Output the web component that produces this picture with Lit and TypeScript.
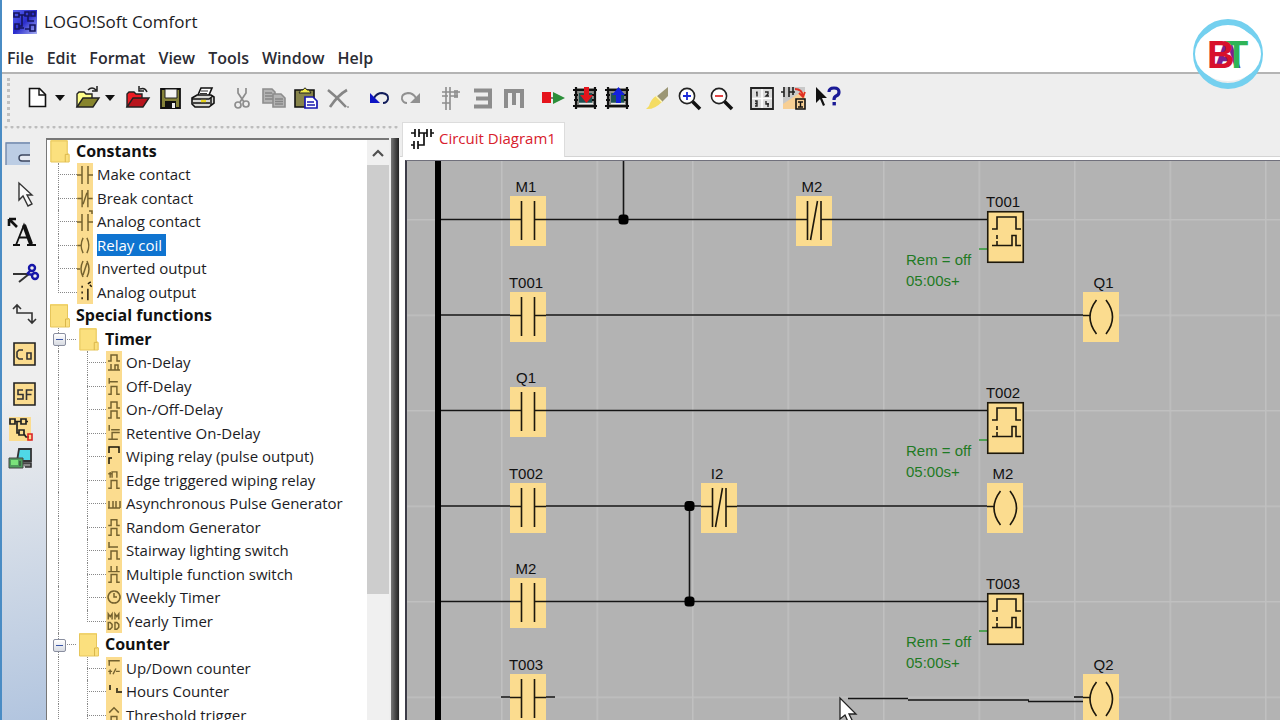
import { LitElement, html, svg, css } from "lit";
import { customElement, state } from "lit/decorators.js";
import { classMap } from "lit/directives/class-map.js";
import { styleMap } from "lit/directives/style-map.js";

/* ---------- toolbar ---------- */

const folder = (light: string, dark: string, arrow: any) => svg`
  <path d="M2 21V8l2-2h5l2 2h6v4" fill="${light}" stroke="#222" stroke-width="1.4"/>
  <path d="M2 21l6-9h16l-6 9z" fill="${dark}" stroke="#222" stroke-width="1.4"/>${arrow}`;

const chip = (color: string, arrow: string) => svg`
  <path d="M2 2h21v20h-21z" fill="#8a8a86"/>
  <path d="M3 1v22M22 1v22M0 4h24M0 20h24M1 9h4M1 14h4M19 9h4M19 14h4" stroke="#111" stroke-width="2.2" fill="none"/>
  <path d="M6 7h13v10h-13z" fill="#1f5252"/><path d="M6 17.500h14" stroke="#eee" stroke-width="1.5"/>
  <path d="${arrow}" fill="${color}"/>`;

const lens = (sign: any) => svg`
  <path d="M15 15l8 8" stroke="#111" stroke-width="3.6"/>
  <circle cx="10" cy="10" r="7.6" fill="#fff" stroke="#222" stroke-width="1.6"/>${sign}`;

const toolIcons: Record<string, any> = {
  new: svg`<path d="M4.500 2.500h10l6 6v12h-16z" fill="#fff" stroke="#111" stroke-width="1.6"/><path d="M14 3v6h6" fill="none" stroke="#111" stroke-width="1.4"/>`,
  open: folder("#ffff8a", "#87842c", svg`<path d="M13 4q4-4 8 0M22 0v5h-5" fill="none" stroke="#222" stroke-width="1.5"/>`),
  close: folder("#ee1c24", "#b8141c", svg`<path d="M22 6q-2-5-7-3M14 0v5h5" fill="none" stroke="#222" stroke-width="1.5"/>`),
  save: svg`<path d="M4 3h19v19h-19z" fill="#85823a" stroke="#111" stroke-width="1.8"/><path d="M8 3h12v9h-12z" fill="#f4f4f4" stroke="#222"/><path d="M8 15h11v7h-11z" fill="#111"/><path d="M15 17h3v5h-3z" fill="#eee"/>`,
  print: svg`<path d="M9 9l3-7h11l-3 7" fill="#fff" stroke="#111" stroke-width="1.6"/><path d="M12 5h7M11 7.500h7" stroke="#333"/><path d="M3 12l5-3h14l3 2v6l-5 4h-14l-3-3z" fill="#d8d8d4" stroke="#111" stroke-width="1.6"/><path d="M3 13h17l4-3M4 17h17" fill="none" stroke="#111" stroke-width="1.4"/><path d="M12 15h5" stroke="#e7d51f" stroke-width="2.4"/><path d="M22 12v7" stroke="#111" stroke-width="1.5"/>`,
  cut: svg`<path d="M9 2v5l6 9M17 2v5l-6 9" fill="none" stroke="#8d8d8d" stroke-width="1.7"/><circle cx="9" cy="19" r="3" fill="none" stroke="#8d8d8d" stroke-width="1.7"/><circle cx="17" cy="18" r="3" fill="none" stroke="#8d8d8d" stroke-width="1.7"/>`,
  copy: svg`<path d="M2 3h9l3 3v11h-12z" fill="#b4b4b4" stroke="#8d8d8d" stroke-width="1.6"/><path d="M4 7h7M4 10h8M4 13h8" stroke="#858585" stroke-width="1.4"/><path d="M12 8h8l4 4v9h-12z" fill="#b4b4b4" stroke="#8d8d8d" stroke-width="1.6"/><path d="M14 13h8M14 15.500h8M14 18h8" stroke="#858585" stroke-width="1.3"/>`,
  paste: svg`<path d="M2 4h19v17h-19z" fill="#87844a" stroke="#111" stroke-width="1.6"/><path d="M6 7l2-3h2q2-4 4 0h2l2 3z" fill="#f2ec4a" stroke="#222"/><path d="M12 11h8l4 4v7h-12z" fill="#fff" stroke="#1818b0" stroke-width="1.7"/><path d="M14 16h7M14 19h8" stroke="#1818b0" stroke-width="1.3"/>`,
  delete: svg`<path d="M3 4q9 7 18 17M22 4q-9 5-17 17" fill="none" stroke="#858585" stroke-width="2.6"/><path d="M22 21h2" stroke="#999" stroke-width="1.6"/>`,
  undo: svg`<path d="M9 12q3-5 8-5q7 1 6 6q-1 4-5 4" fill="none" stroke="#111c5a" stroke-width="2"/><path d="M5 7v10h10z" fill="#0d14c4"/>`,
  redo: svg`<path d="M19 12q-3-5-8-5q-7 1-6 6q1 4 5 4" fill="none" stroke="#909090" stroke-width="2"/><path d="M23 7v10h-10z" fill="#909090"/>`,
  ladder: svg`<path d="M9 1v23M13 1v23M5 6h18M5 10h6M13 10h8M18 4v8M5 17h8M20 4v8" stroke="#8d8d8d" stroke-width="1.6" fill="none"/>`,
  alignE: svg`<path d="M5 4.500h16v16h-16M7 12.500h14" fill="none" stroke="#8d8d8d" stroke-width="4"/>`,
  alignM: svg`<path d="M5 22v-17h16v17M13 5v14" fill="none" stroke="#8d8d8d" stroke-width="4"/>`,
  run: svg`<path d="M1 6h9v11h-9z" fill="#e5141c"/><path d="M12 6l12 6l-12 6z" fill="#2c8f3a"/><path d="M10 12h2" stroke="#555" stroke-width="1.5"/>`,
  download: chip("#e5141c", "M11 1h5v8h4l-6.500 8l-6.500-8h4z"),
  upload: chip("#1420dc", "M11 17h5v-8h4l-6.500-8l-6.500 8h4z"),
  brush: svg`<path d="M23 1v9l-6 6l-6-5z" fill="#9b9675"/><path d="M11 10l6 6q-8 8-16 7l3-3q2-7 7-10z" fill="#f4dc63"/><path d="M11 10l6 6" stroke="#fff6b8" stroke-width="1.4"/>`,
  zoomIn: lens(svg`<path d="M6 10h8M10 6v8" stroke="#1c2cd8" stroke-width="1.8"/>`),
  zoomOut: lens(svg`<path d="M6 10h8" stroke="#e03030" stroke-width="1.8"/>`),
  grid: svg`<path d="M2 2h22v21h-22z" fill="#dcdcdc" stroke="#222" stroke-width="1.8"/><path d="M13 3v19M3 12.500h20" stroke="#fff" stroke-width="1.6"/><path d="M8 5.500v5M7 6.500h1M16 6h3v2l-2 2h3M6 15h2v5h-2M8 17.500h-2M17 15v3h3M19 17v4" fill="none" stroke="#222" stroke-width="1.4"/>`,
  convert: svg`<path d="M2 1h22v22h-22z" fill="#c9c9c9"/><path d="M2 23v-5l18-12h4v17z" fill="#f7cf94"/><path d="M3 1v10M8 1v10M0 6h3M8 6h6M12 1v8" stroke="#222" stroke-width="1.6"/><path d="M14 3q7 0 8 7M18 7l4 4l2-5" fill="none" stroke="#e03024" stroke-width="1.8"/><path d="M15 13h9v10h-9z" fill="#f7cf94" stroke="#111" stroke-width="1.6"/><path d="M17 16h5M19.500 16v5M17 21h5" stroke="#111" stroke-width="1.4"/>`,
  help: svg`<path d="M3 1l11 11h-5l3 7l-2 1l-3-7l-4 4z" fill="#111"/><path d="M16 6q0-4 5-4q5 0 5 4q0 3-3 4q-2 1-2 4" fill="none" stroke="#1a1a96" stroke-width="3.2"/><path d="M19.500 16h3.400v3.400h-3.400z" fill="#1a1a96"/>`,
};

const toolGroups: string[][] = [
  ["new", "open", "close", "save", "print"],
  ["cut", "copy", "paste", "delete"],
  ["undo", "redo"],
  ["ladder", "alignE", "alignM"],
  ["run", "download", "upload"],
  ["brush", "zoomIn", "zoomOut"],
  ["grid", "convert", "help"],
];

/* ---------- tool rail ---------- */

const railIcons: [string, number, any][] = [
  ["Panels", 1, svg`<path d="M0 0h24v23h-24z" fill="#bccde4"/><path d="M0 23v-22h24" fill="none" stroke="#7389ac" stroke-width="1.4"/><path d="M24 13h-8q-3 0-3 3t3 3h8" fill="#e6eaf2" stroke="#3c4760" stroke-width="1.4"/>`],
  ["Select", 0, svg`<path d="M7 1v17l4-4l5 10l4-2l-5-9h5z" fill="#fafafa" stroke="#333" stroke-width="1.4"/>`],
  ["Text", 0, svg`<path d="M-3-3h7M-3-3v7M-3-3l8 8" stroke="#111" stroke-width="2.600" fill="none"/><path d="M1 23h7M15 23h9M4 23l8-20l8 20M7 15.500h10" fill="none" stroke="#111" stroke-width="1.8"/><path d="M12 3l7 19" stroke="#111" stroke-width="4"/>`],
  ["Cut connection", 0, svg`<path d="M1 12h15M7 20l10-8" stroke="#333" stroke-width="2"/><circle cx="20" cy="6" r="3" fill="none" stroke="#1616a8" stroke-width="2.400"/><circle cx="23" cy="14" r="3" fill="none" stroke="#1616a8" stroke-width="2.400"/><path d="M15 12l4-4M16 12l5 1" stroke="#1616a8" stroke-width="2.400"/>`],
  ["Connect", 0, svg`<path d="M5 3v8h15v10M1 7l4-4l4 4M16 17l4 4l4-4" fill="none" stroke="#333" stroke-width="1.6"/>`],
  ["Constants", 0, svg`<path d="M2 1h21v22h-21z" fill="#fbdc8f" stroke="#222" stroke-width="1.6"/><path d="M11 8h-4l-2 2v5l2 2h4M15 11h4v6h-4z" fill="none" stroke="#333" stroke-width="1.6"/>`],
  ["Special functions", 0, svg`<path d="M2 1h21v22h-21z" fill="#fbdc8f" stroke="#222" stroke-width="1.6"/><path d="M11 8h-5v4.500h5v4.500h-6M14.500 18v-10h6M14.500 12.500h5" fill="none" stroke="#333" stroke-width="1.6"/>`],
  ["Diagram", 0, svg`<path d="M-3 0h22v24h-22z" fill="#fbdc8f"/><path d="M-2 2h5v5h-5zM9 2h5v5h-5zM3 4.500h6M14 4.500h2M5 5v11h2M7 13h5v5h-5zM12 17l2 3h3" fill="none" stroke="#222" stroke-width="1.7"/><path d="M16 17h4v6h-4z" fill="none" stroke="#d22" stroke-width="1.6"/>`],
  ["Online", 0, svg`<path d="M7 2h12v12h-14z" fill="#4fd8e6" stroke="#333" stroke-width="1.800"/><path d="M9 16h10v4h-6" fill="#888" stroke="#333" stroke-width="1.6"/><path d="M-3 11h14v10h-14z" fill="#4f9c5c" stroke="#444"/><path d="M-1 13h7v5h-7z" fill="#7be27b"/><path d="M8 14v5" stroke="#333"/>`],
];

/* ---------- element tree ---------- */

const PULSE = "M2 10h3v-6h6v6h3M2 20h3v-7h6v7h3";
const glyphs: Record<string, string> = {
  make: "M0 12h5M5 3v18M11 3v18M11 12h5",
  brk: "M0 12h5M5 3v18M11 3v18M11 12h5M6 18l4-12",
  analog: "M0 12h5M5 4v17M11 4v17M11 12h5M12 1h3v3",
  coil: "M0 12h4M6 4q-4 8 0 16M10 4q4 8 0 16",
  inverted: "M0 12h3M6 4q-4 8 0 16M10 4q4 8 0 16M6 18l4-12",
  aout: "M5 5v2M5 11v2M5 17v2M11 8v12M11 3l3-2M13 4l2 2",
  on: "M2 10h3v-6h6v6h3M2 19h12M5 13v6M9 19v-5h3v5",
  off: "M3 9v-6M3 7h9M2 20h3v-8h6v8h3",
  onoff: PULSE,
  retentive: "M3 9v-6M5 8h9M2 18h4v-7h8M6 18h6",
  wiping: "M3 8v-6h10v6M3 19v-6h3",
  edge: "M2 5h4M4 3v6M6 9v-6h5v6M2 20h3v-8h6v8h3",
  async: "M2 16h12M3 16v-7M7 16v-7M10 16v-7M14 16v-7",
  random: PULSE,
  stair: "M3 9v-6M3 8h9M2 20h3v-8h6v8h3",
  multi: "M2 9h12M5 9v-6M11 9v-6M2 20h3v-8h6v8h3",
  weekly: "M8 5a6 6 0 1 0 .1 0M8 7v4h3",
  yearly: "M2 10v-6l2 3l2-3v6M9 10v-6l2 3l2-3v6M2 13h2l2 2v3l-2 2h-2zM9 13h2l2 2v3l-2 2h-2z",
  updown: "M2 4h12M3 4v5M2 15h4M4 13v5M7 18l3-6M10 15h4",
  hours: "M4 5v5M11 8v3M10 12h6",
  threshold: "M3 9l5-5l5 5M2 20h3v-7h6v7h3",
};
const darkGlyphs = ["aout", "wiping", "hours"];

type Row = { text: string; level: number; icon?: string; last?: boolean };
const leaves = (level: number, items: [string, string][], ends = true): Row[] =>
  items.map(([icon, text], i) => ({ text, level, icon, last: ends && i === items.length - 1 }));

const rows: Row[] = [
  { text: "Constants", level: 0 },
  ...leaves(1, [["make", "Make contact"], ["brk", "Break contact"], ["analog", "Analog contact"], ["coil", "Relay coil"], ["inverted", "Inverted output"], ["aout", "Analog output"]]),
  { text: "Special functions", level: 0 },
  { text: "Timer", level: 1 },
  ...leaves(2, [["on", "On-Delay"], ["off", "Off-Delay"], ["onoff", "On-/Off-Delay"], ["retentive", "Retentive On-Delay"], ["wiping", "Wiping relay (pulse output)"], ["edge", "Edge triggered wiping relay"], ["async", "Asynchronous Pulse Generator"], ["random", "Random Generator"], ["stair", "Stairway lighting switch"], ["multi", "Multiple function switch"], ["weekly", "Weekly Timer"], ["yearly", "Yearly Timer"]]),
  { text: "Counter", level: 1 },
  ...leaves(2, [["updown", "Up/Down counter"], ["hours", "Hours Counter"], ["threshold", "Threshold trigger"]], false),
];

/* ---------- circuit ---------- */

const PITCH = 95.5;
const ROW0 = 58.5;
const COL0 = 103;
const rowY = (r: number) => ROW0 + r * PITCH;
const colX = (c: number) => COL0 + c * PITCH;

type Kind = "contact" | "break" | "coil" | "timer";
type Block = { kind: Kind; label: string; col: number; row: number };

const blocks: Block[] = [
  { kind: "contact", label: "M1", col: 0, row: 0 },
  { kind: "break", label: "M2", col: 3, row: 0 },
  { kind: "timer", label: "T001", col: 5, row: 0 },
  { kind: "contact", label: "T001", col: 0, row: 1 },
  { kind: "coil", label: "Q1", col: 6, row: 1 },
  { kind: "contact", label: "Q1", col: 0, row: 2 },
  { kind: "timer", label: "T002", col: 5, row: 2 },
  { kind: "contact", label: "T002", col: 0, row: 3 },
  { kind: "break", label: "I2", col: 2, row: 3 },
  { kind: "coil", label: "M2", col: 5, row: 3 },
  { kind: "contact", label: "M2", col: 0, row: 4 },
  { kind: "timer", label: "T003", col: 5, row: 4 },
  { kind: "contact", label: "T003", col: 0, row: 5 },
  { kind: "coil", label: "Q2", col: 6, row: 5 },
];

const symbols: Record<Kind, any> = {
  contact: svg`<path d="M0 23.500h11.500M11.500 5v39M24.500 5v39M24.500 23.500h11.500"/>`,
  break: svg`<path d="M0 23.500h11.500M11.500 5v39M25 5v39M25 23.500h11M14.500 44l7-39"/>`,
  coil: svg`<path d="M0 23.500h7M13.500 8q-13 17 0 34M23 8q13 17 0 34"/>`,
  timer: svg`<rect x=".75" y=".75" width="35.500" height="50.500"/><path d="M5 18h5v-12h19v12h5M5 34.500h20v-10h4v10h5M10 24v4M10 30v4"/>`,
};

@customElement("app-root")
export class AppRoot extends LitElement {
  @state() private selected = "Relay coil";

  static styles = css`
    :host { display: flex; flex-direction: column; height: 100vh; box-sizing: border-box; overflow: hidden; position: relative; border-left: 2px solid #4a8cc4; background: #eee; color: #1c1c24; font: 15px/20px "Open Sans", "Noto Sans", sans-serif; }
    button { font: inherit; color: inherit; border: 0; padding: 0; margin: 0; background: none; text-align: left; }
    svg { display: block; overflow: visible; }
    .title { display: flex; align-items: center; gap: 7px; height: 44px; padding-left: 11px; background: #fff; font-size: 17px; flex: none; }
    h1 { font: inherit; margin: 0; }
    .menu { display: flex; gap: 13px; height: 28px; padding-left: 5px; background: #fff; border-bottom: 2px solid #b4b4b4; flex: none; font-size: 16px; font-weight: 600; color: #2c2c34; }
    .toolbar { display: flex; align-items: center; height: 48px; gap: 16px; flex: none; }
    .grip { align-self: stretch; margin: 4px 0 0 5px; border-left: 3px dotted #c0c0c0; margin-right: -1px; }
    .group { display: flex; gap: 8px; }
    .tool { display: flex; align-items: center; height: 24px; }
    .caret { width: 12px; margin-left: 6px; }
    .body { display: flex; flex: 1; min-height: 0; }
    .side { display: flex; flex-direction: column; width: 398px; flex: none; }
    .dots { height: 3px; margin: 4px 0 5px 2px; background: radial-gradient(circle at 2px 1px, #bdbdbd 1px, #eee 2px) 0 0 / 6px 3px; flex: none; }
    .panels { display: flex; flex: 1; min-height: 0; }
    .rail { width: 44px; flex: none; display: flex; flex-direction: column; background: linear-gradient(170deg, #eee 45%, #b2c5df 100%); }
    .railbtn { height: 40px; display: flex; align-items: center; padding-left: 10px; flex: none; }
    .railbtn.wide { padding-left: 4px; }
    .railbtn.short { height: 30px; }
    .tree { flex: 1; margin: 4px 0 0; padding: 0; border-left: 1px solid #777; border-top: 2px solid #777; background: #fff; display: flex; overflow: hidden; }
    .list { flex: 1; min-width: 0; margin: 0; padding: 0; list-style: none; display: grid; grid-auto-rows: 23px 24px; }
    .row { display: flex; align-items: stretch; white-space: nowrap; }
    .guide { width: 29px; flex: none; display: grid; grid-template: 1fr 1fr / 11px 1fr; }
    .leafguide { width: 30px; }
    .v { grid-area: 1 / 2 / 3 / 3; border-left: 1px dotted #888; }
    .half .v { grid-row: 1 / 2; }
    .h { grid-area: 1 / 2 / 2 / 3; border-bottom: 1px dotted #888; }
    .toggle { grid-area: 1 / 1 / 3 / 3; align-self: center; margin-left: 6px; width: 13px; height: 13px; border: 1px solid #8a8fa0; border-radius: 2px; background: linear-gradient(#fff, #d8dbe2); display: grid; place-items: center; z-index: 1; box-sizing: border-box; }
    .minus { width: 7px; height: 1px; background: #3a56a8; }
    .folder { width: 20px; margin: 0 6px 0 3px; flex: none; }
    .glyph { width: 16px; flex: none; background: #fbdc8f; margin-right: 4px; overflow: hidden; }
    .name { align-self: flex-start; height: 22px; line-height: 22px; }
    .name.bold { font-weight: 700; font-size: 16px; color: #111; }
    .name.on { background: #0f74d0; color: #fff; padding-right: 4px; }
    .scroll { width: 22px; flex: none; background: #f0f0f0; display: flex; flex-direction: column; }
    .up { height: 25px; display: grid; place-items: center; flex: none; }
    .thumb { height: 74%; background: #cdcdcd; }
    .splitter { width: 8px; margin: 4px 1px 0 2px; background: linear-gradient(90deg, #777, #222); flex: none; }
    .work { flex: 1; min-width: 0; display: flex; flex-direction: column; }
    .tabs { height: 34px; display: flex; padding-left: 2px; border-bottom: 1px solid #d4d4d4; flex: none; }
    .tab { display: flex; align-items: center; gap: 5px; padding: 0 8px 4px 8px; background: #fff; border: 1px solid #dcdcdc; border-bottom: 0; color: #d8202c; margin-bottom: -1px; }
    .page { flex: 1; min-height: 0; background: #fff; padding: 3px 0 0 5px; display: flex; }
    .canvas { flex: 1; position: relative; overflow: hidden; background: #b3b3b3; border-left: 2px solid #3c3c48; border-top: 1px solid #70707c; font: 15px/16px "Liberation Sans", Arial, sans-serif; }
    .wires { position: absolute; width: 100%; height: 100%; }
    .block { position: absolute; width: 36px; display: flex; flex-direction: column; align-items: center; gap: 1px; color: #111; }
    .label { padding-right: 4px; }
    .label.out { padding: 0 0 0 5px; }
    .shape { width: 36px; height: 50px; background: #fbdc8f; fill: none; stroke: #1d180c; stroke-width: 1.6px; }
    .shape.timer { width: 37px; height: 52px; }
    .param { position: absolute; margin: 0; line-height: 21px; color: #1f7a24; white-space: nowrap; }
    .pointer { position: absolute; width: 18px; height: 28px; }
    .badge { position: absolute; right: 16px; top: 18px; width: 72px; height: 72px; font-family: "Liberation Sans Narrow", "Liberation Sans", Arial, sans-serif; font-weight: 700; font-size: 38px; }
  `;

  private tool(name: string) {
    const withMenu = name === "new" || name === "open";
    return html`<div class="tool">
      <button aria-label=${name}><svg width="24" height="24" viewBox="0 0 24 24">${toolIcons[name]}</svg></button>
      ${withMenu ? html`<button class="caret" aria-label="${name} options"><svg width="12" height="8" viewBox="0 0 12 8"><path d="M0 1h10l-5 6z" fill="#111" /></svg></button>` : ""}
    </div>`;
  }

  private row(r: Row) {
    const isFolder = !r.icon;
    const outer = r.level === 2 ? html`<span class="guide"><span class="v"></span></span>` : "";
    const inner = r.level === 0 ? "" : html`<span class=${classMap({ guide: true, leafguide: !isFolder, half: !!r.last })}>
      <span class="v"></span><span class="h"></span>
      ${isFolder ? html`<button class="toggle" aria-label="Collapse ${r.text}"><span class="minus"></span></button>` : ""}
    </span>`;
    const icon = isFolder
      ? html`<svg class="folder" viewBox="0 0 20 24"><path d="M0 0h18v14l2 1v8h-20z" fill="#fbe07e"/><path d="M.5 23v-22h17v13l2 1v8z" fill="none" stroke="#e6c65c"/><path d="M15.500 23v-8h3" fill="none" stroke="#d9b64a"/></svg>`
      : html`<svg class="glyph" viewBox="0 0 16 24" fill="none" stroke=${darkGlyphs.includes(r.icon!) ? "#1a1508" : "#75622f"} stroke-width="1.500"><path d=${glyphs[r.icon!]} /></svg>`;
    return html`<li class="row">${outer}${inner}${icon}<button class=${classMap({ name: true, bold: isFolder, on: r.text === this.selected })} @click=${() => (this.selected = r.text)}>${r.text}</button></li>`;
  }

  private block(b: Block) {
    const timer = b.kind === "timer";
    const top = rowY(b.row) - (timer ? 25 : 40);
    return html`<div class="block" style=${styleMap({ left: `${Math.floor(colX(b.col))}px`, top: `${Math.floor(top)}px` })}>
        <span class=${classMap({ label: true, out: b.kind === "coil" && b.label[0] === "Q" })}>${b.label}</span>
        <svg class=${classMap({ shape: true, timer })}>${symbols[b.kind]}</svg>
      </div>
      ${timer ? html`<p class="param" style=${styleMap({ left: `${Math.floor(colX(b.col)) - 81}px`, top: `${Math.floor(rowY(b.row)) + 30}px` })}>Rem = off<br />05:00s+</p>` : ""}`;
  }

  private wires() {
    const runs: [number, number, number][] = [
      [34, 580, 0], [34, 676, 1], [34, 580, 2], [34, 580, 3], [34, 580, 4], [94, 148, 5], [667, 682, 5],
    ];
    return html`<svg class="wires">
      <defs><pattern id="grid" x="94" y="58" width="95.500" height="95.500" patternUnits="userSpaceOnUse"><path d="M.75 0v96M0 .75h96" stroke="#c0c0c0" stroke-width="1.500" /></pattern></defs>
      <rect width="100%" height="100%" fill="url(#grid)" />
      <rect x="28" width="6" height="100%" fill="#000" />
      <g stroke="#151515" stroke-width="1.600" fill="none">
        ${runs.map(([a, b, r]) => svg`<path d="M${a} ${rowY(r)}H${b}" />`)}
        <path d="M216.500 0V${rowY(0)}M282.500 ${rowY(3)}V${rowY(4)}" />
        <path d="M441 537.500h60M501 539h121M621 540.500h61" />
      </g>
      <g stroke="#2f9a35" stroke-width="1.500">${[0, 2, 4].map((r) => svg`<path d="M572 ${rowY(r) + 29.5}h9" />`)}</g>
      ${[[216.5, 0], [282.5, 3], [282.5, 4]].map(([x, r]) => svg`<rect x=${x - 5} y=${rowY(r) - 5} width="10" height="10" rx="3.500" />`)}
    </svg>`;
  }

  render() {
    return html`
      <header class="title">
        <svg width="24" height="24" viewBox="0 0 24 24"><defs><linearGradient id="app" x2="1" y2="1"><stop stop-color="#5a66f0"/><stop offset=".5" stop-color="#2a2ccc"/><stop offset="1" stop-color="#a8b0f4"/></linearGradient></defs><rect width="24" height="24" fill="url(#app)"/><path d="M1 3h5v4h-5zM12 2h4v4h-4zM18 2h4v4h-4zM2 14h4v5h-4zM6 5h6M9 5v11h-3M15 6v5h6M17 15h5v6h-5zM12 19h5M6 18h5" fill="none" stroke="#14145e" stroke-width="1.600"/></svg>
        <h1>LOGO!Soft Comfort</h1>
      </header>
      <nav class="menu">${["File", "Edit", "Format", "View", "Tools", "Window", "Help"].map((m) => html`<button>${m}</button>`)}</nav>
      <div class="toolbar" role="toolbar"><span class="grip"></span>${toolGroups.map((g) => html`<div class="group">${g.map((n) => this.tool(n))}</div>`)}</div>
      <div class="body">
        <div class="side">
          <div class="dots"></div>
          <div class="panels">
            <div class="rail">${railIcons.map(([name, wide, art], i) => html`<button aria-label=${name} class=${classMap({ railbtn: true, wide: !!wide, short: i > 6 })}><svg width="24" height="24" viewBox="0 0 24 24">${art}</svg></button>`)}</div>
            <div class="tree">
              <ul class="list">${rows.map((r) => this.row(r))}</ul>
              <div class="scroll"><button class="up" aria-label="Scroll up"><svg width="12" height="8" viewBox="0 0 12 8"><path d="M1 7l5-5l5 5" fill="none" stroke="#505050" stroke-width="2.200"/></svg></button><div class="thumb"></div></div>
            </div>
            <div class="splitter"></div>
          </div>
        </div>
        <main class="work">
          <div class="tabs"><button class="tab"><svg width="23" height="22" viewBox="0 0 23 22"><path d="M0 6h4M4 2v8M8 2v8M8 6h8M16 2v8M20 2v8M20 6h3M13 6v12h-6M0 18h3M3 14v8M7 14v8" fill="none" stroke="#111" stroke-width="1.700"/></svg>Circuit Diagram1</button></div>
          <div class="page">
            <div class="canvas">
              ${this.wires()}${blocks.map((b) => this.block(b))}
              <svg class="pointer" style=${styleMap({ left: "432px", top: "536px" })} viewBox="0 0 18 28"><path d="M1 1v21l5-4l4 9l4-2l-4-8h7z" fill="#fff" stroke="#222" stroke-width="1.300"/></svg>
            </div>
          </div>
        </main>
      </div>
      <svg class="badge" viewBox="0 0 72 72"><circle cx="36" cy="36" r="32" fill="none" stroke="#74d0ef" stroke-width="6"/><ellipse cx="36" cy="36" rx="33" ry="27" fill="#fff"/><text x="22" y="50" fill="#7a1f92">A</text><text x="33" y="50" fill="#2fb457">T</text><text x="15" y="50" fill="#d8102c">B</text></svg>
    `;
  }
}
